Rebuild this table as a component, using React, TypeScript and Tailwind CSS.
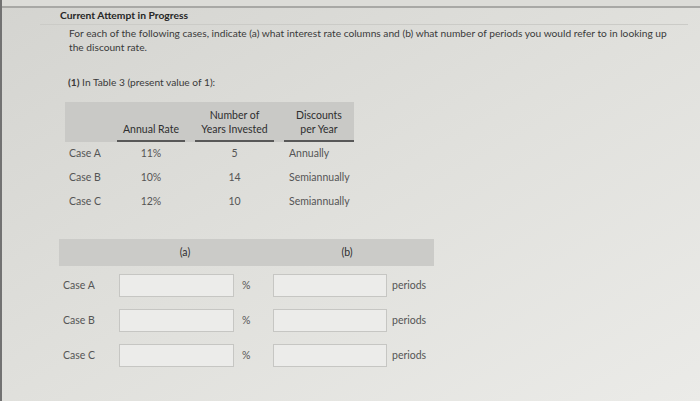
import React from 'react';

const cases = [
  { name: 'Case A', rate: '11%', years: '5', per: 'Annually' },
  { name: 'Case B', rate: '10%', years: '14', per: 'Semiannually' },
  { name: 'Case C', rate: '12%', years: '10', per: 'Semiannually' },
];

const App: React.FC = () => {
  return (
    <div className="w-[700px] h-[401px] overflow-hidden border-l-2 border-[#727272] bg-linear-to-br from-[#d4d4d0] via-[#e0e0dc] to-[#ebebe8] font-['Lato',sans-serif] text-[#3a3a3a]">
      <div className="h-[8px] border-b-2 border-[#a8a8a5] bg-[#dcdcd8]" />

      <div className="ml-[38px] mr-[12px] border-b border-[#cbcbc7] pl-[20px] pt-[1px] pb-[3px] text-[10.3px] leading-[12px] font-bold text-[#262626]">
        Current Attempt in Progress
      </div>

      <div className="pl-[63px]">
        <p className="mt-[1px] pl-[4px] w-[609px] text-[10.2px] leading-[14px]">
          For each of the following cases, indicate (a) what interest rate columns and (b) what number of periods you would refer to in looking up the discount rate.
        </p>
        <p className="mt-[21px] pl-[3px] text-[10.2px] leading-[14px]">
          <span className="font-bold">(1)</span> In Table 3 (present value of 1):
        </p>

        {/* table 3 data */}
        <div className="mt-[13px] w-[289px] text-[10.5px]">
          <div className="grid grid-cols-[42px_68px_79px_70px] gap-x-[10px] bg-[#c9c9c6] pt-[6px] text-center leading-[14px] text-[#2e2e2e]">
            <div />
            <div className="flex items-end justify-center border-b-2 border-[#585858] pb-[4px]">Annual Rate</div>
            <div className="border-b-2 border-[#585858] pb-[4px]">Number of<br />Years Invested</div>
            <div className="border-b-2 border-[#585858] pb-[4px]">Discounts<br />per Year</div>
          </div>
          {cases.map((c) => (
            <div key={c.name} className="grid h-[24px] grid-cols-[42px_68px_79px_70px] items-center gap-x-[10px] text-[#555]">
              <div className="pl-[4px]">{c.name}</div>
              <div className="text-center">{c.rate}</div>
              <div className="text-center">{c.years}</div>
              <div className="pl-[5px] whitespace-nowrap">{c.per}</div>
            </div>
          ))}
        </div>

        {/* answers */}
        <div className="mt-[25px] -ml-[6px] w-[375px] text-[10.5px]">
          <div className="flex h-[27px] items-center bg-[#cbcbc8] text-[#2e2e2e]">
            <div className="w-[60px]" />
            <div className="w-[132px] text-center">(a)</div>
            <div className="ml-[9px] w-[174px] text-center">(b)</div>
          </div>
          <div className="mt-[2px]">
            {cases.map((c) => (
              <div key={c.name} className="flex h-[35px] items-center text-[#555]">
                <div className="w-[60px] pl-[4px]">{c.name}</div>
                <input className="h-[23px] w-[115px] border border-[#c6c6c3] bg-[#ececea] outline-none" />
                <div className="ml-[8px] w-[31px]">%</div>
                <input className="h-[23px] w-[114px] border border-[#c6c6c3] bg-[#ececea] outline-none" />
                <div className="ml-[5px]">periods</div>
              </div>
            ))}
          </div>
        </div>
      </div>
    </div>
  );
};

export default App;
